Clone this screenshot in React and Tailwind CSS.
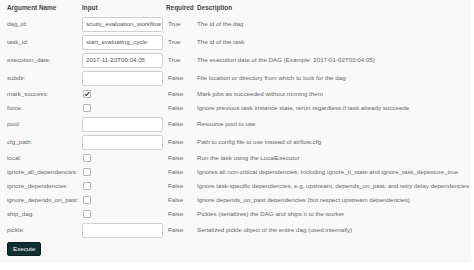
const rows = [
  { name: 'dag_id:', type: 'text', value: 'scuity_evaluation_workflow', req: 'True', desc: 'The id of the dag' },
  { name: 'task_id:', type: 'text', value: 'start_evaluating_cycle', req: 'True', desc: 'The id of the task' },
  { name: 'execution_date:', type: 'text', value: '2017-11-23T00:04:05', req: 'True', desc: 'The execution date of the DAG (Example: 2017-01-02T03:04:05)' },
  { name: 'subdir:', type: 'text', value: '', req: 'False', desc: 'File location or directory from which to look for the dag' },
  { name: 'mark_success:', type: 'check', checked: true, req: 'False', desc: 'Mark jobs as succeeded without running them' },
  { name: 'force:', type: 'check', req: 'False', desc: 'Ignore previous task instance state, rerun regardless if task already succeede' },
  { name: 'pool:', type: 'text', value: '', req: 'False', desc: 'Resource pool to use' },
  { name: 'cfg_path:', type: 'text', value: '', req: 'False', desc: 'Path to config file to use instead of airflow.cfg' },
  { name: 'local:', type: 'check', req: 'False', desc: 'Run the task using the LocalExecutor' },
  { name: 'ignore_all_dependencies:', type: 'check', req: 'False', desc: 'Ignores all non-critical dependencies, including ignore_ti_state and ignore_task_depsstore_true' },
  { name: 'ignore_dependencies:', type: 'check', req: 'False', desc: 'Ignore task-specific dependencies, e.g. upstream, depends_on_past, and retry delay dependencies' },
  { name: 'ignore_depends_on_past:', type: 'check', req: 'False', desc: 'Ignore depends_on_past dependencies (but respect upstream dependencies)' },
  { name: 'ship_dag:', type: 'check', req: 'False', desc: 'Pickles (serializes) the DAG and ships it to the worker' },
  { name: 'pickle:', type: 'text', value: '', req: 'False', desc: 'Serialized pickle object of the entire dag (used internally)' },
];

function Checkbox({ checked }) {
  return (
    <div className="ml-[1px] w-[8px] h-[8px] rounded-[1px] border border-[#b5b5b5] bg-white flex items-center justify-center">
      {checked && (
        <svg viewBox="0 0 10 10" className="w-[8px] h-[8px]">
          <path d="M1.5 5.2 L4 7.6 L8.6 1.8" fill="none" stroke="#333" strokeWidth="1.8" />
        </svg>
      )}
    </div>
  );
}

export default function App() {
  return (
    <div
      className="w-[474px] h-[270px] bg-white overflow-hidden"
      style={{ fontFamily: '"Liberation Sans", Arial, sans-serif' }}
    >
      <div className="w-[471px] h-[263px] bg-[#f9f9f9] text-[6.2px] text-[#666]">
        <div className="grid grid-cols-[82px_84px_31px_1fr] h-[15px] items-center font-bold text-[6.4px] text-[#444]">
          <div className="pl-[7px]">Argument Name</div>
          <div>Input</div>
          <div>Required</div>
          <div>Description</div>
        </div>
        {rows.map((r) => (
          <div
            key={r.name}
            className={`grid grid-cols-[82px_84px_31px_1fr] items-center ${r.type === 'text' ? 'h-[18px]' : 'h-[14px]'}`}
          >
            <div className="pl-[7px] whitespace-nowrap">{r.name}</div>
            <div>
              {r.type === 'text' ? (
                <div className="w-[81px] h-[15px] border border-[#cfcfcf] rounded-[2px] bg-white flex items-center px-[3px] text-[#555] whitespace-nowrap overflow-hidden">
                  {r.value}
                </div>
              ) : (
                <Checkbox checked={r.checked} />
              )}
            </div>
            <div className="pl-[2px]">{r.req}</div>
            <div className="whitespace-nowrap">{r.desc}</div>
          </div>
        ))}
        <div className="pl-[7px] pt-[3px]">
          <button className="h-[14px] px-[5px] rounded-[2px] bg-[#12302f] border border-[#0a1f20] text-white text-[6.2px] flex items-center">
            Execute
          </button>
        </div>
      </div>
    </div>
  );
}
